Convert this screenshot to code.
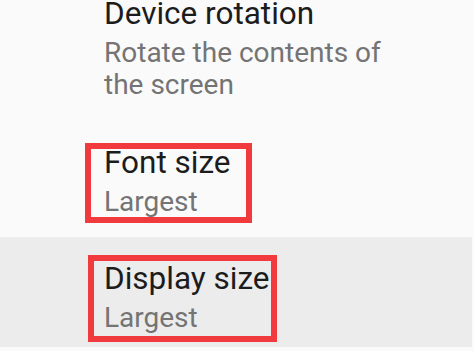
export default function App() {
	return (
		<div className="w-[474px] h-[351px] bg-[#fafafa] overflow-hidden" style={{ fontFamily: 'Roboto, "Noto Sans", sans-serif' }}>
			{/* device rotation */}
			<div className="pl-[104px]">
				<div className="-mt-[2px] text-[31.5px] leading-8 text-[#1c1c1c]">Device rotation</div>
				<div className="mt-[7px] text-[28px] leading-8 text-[#747474]">
					Rotate the contents of
					<br />
					the screen
				</div>
			</div>

			{/* font size */}
			<div className="ml-[85px] mt-[42px] w-[167px] h-[80px] border-[6px] border-[#f03a3d] pl-[13px]">
				<div className="text-[31.5px] leading-7 text-[#1c1c1c]">Font size</div>
				<div className="mt-[11px] text-[28px] leading-7 text-[#747474]">Largest</div>
			</div>

			{/* display size - pressed row */}
			<div className="mt-[14px] w-[472px] h-[110px] bg-[#ececec] pt-[18px]">
				<div className="ml-[88px] w-[189px] h-[87px] border-[6px] border-[#f03a3d] pl-[10px] pt-[4px]">
					<div className="text-[31.5px] leading-7 text-[#1c1c1c]">Display size</div>
					<div className="mt-[11px] text-[28px] leading-7 text-[#747474]">Largest</div>
				</div>
			</div>
		</div>
	)
}
